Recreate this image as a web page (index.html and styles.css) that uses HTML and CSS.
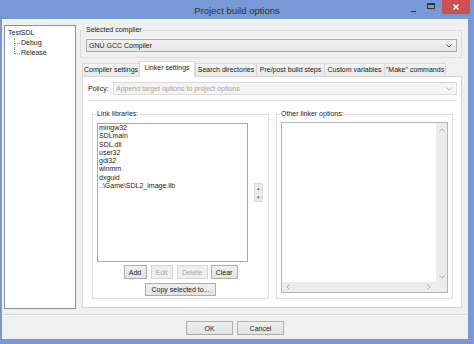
FILE: index.html
```html
<!DOCTYPE html>
<html lang="en">
<head>
  <meta charset="UTF-8" />
  <title>Project build options</title>
  <link rel="stylesheet" href="styles.css">
</head>
<body>

<div class="window">
  <div class="titlebar">
    <div></div>
    <div class="title">Project build options</div>
    <div class="caption">
      <span class="cap cap-min"><i class="min-glyph"></i></span>
      <span class="cap cap-max"><i class="max-glyph"></i></span>
      <span class="cap cap-close">
        <svg width="6" height="6" viewBox="0 0 6 6"><path d="M0.5 0.5 L5.5 5.5 M5.5 0.5 L0.5 5.5" stroke="#fff" stroke-width="1.4"/></svg>
      </span>
    </div>
  </div>

  <div class="client">
    <div class="main">
      <div class="tree">
        <div class="tree-root">TestSDL</div>
        <div class="tree-children">
          <div class="tree-child">Debug</div>
          <div class="tree-child">Release</div>
        </div>
      </div>

      <div class="right">
        <fieldset class="group compiler-group">
          <legend>Selected compiler</legend>
          <div class="combo">
            <span>GNU GCC Compiler</span>
            <svg width="6" height="4" viewBox="0 0 6 4"><path d="M0.5 0.5 L3 3 L5.5 0.5" fill="none" stroke="#555" stroke-width="1"/></svg>
          </div>
        </fieldset>

        <div class="tabs">
          <div class="tab tab-compiler">Compiler settings</div>
          <div class="tab tab-linker active">Linker settings</div>
          <div class="tab tab-search">Search directories</div>
          <div class="tab tab-steps">Pre/post build steps</div>
          <div class="tab tab-vars">Custom variables</div>
          <div class="tab tab-make">"Make" commands</div>
        </div>

        <div class="tab-panel">
          <div class="policy-row">
            <span class="policy-label">Policy:</span>
            <div class="combo disabled">
              <span>Append target options to project options</span>
              <svg width="6" height="4" viewBox="0 0 6 4"><path d="M0.5 0.5 L3 3 L5.5 0.5" fill="none" stroke="#bbb" stroke-width="1"/></svg>
            </div>
          </div>
          <div class="separator"></div>

          <div class="columns">
            <fieldset class="group libs">
              <legend>Link libraries:</legend>
              <div class="list-row">
                <div class="listbox">
                  <div>mingw32</div>
                  <div>SDLmain</div>
                  <div>SDL.dll</div>
                  <div>user32</div>
                  <div>gdi32</div>
                  <div>winmm</div>
                  <div>dxguid</div>
                  <div>..\Game\SDL2_image.lib</div>
                </div>
                <div class="updown">
                  <span>&#9652;</span>
                  <span>&#9662;</span>
                </div>
              </div>
              <div class="btn-row">
                <button class="btn btn-add">Add</button>
                <button class="btn btn-edit" disabled>Edit</button>
                <button class="btn btn-delete" disabled>Delete</button>
                <button class="btn btn-clear">Clear</button>
              </div>
              <div class="btn-row copy-row">
                <button class="btn btn-copy">Copy selected to...</button>
              </div>
            </fieldset>

            <fieldset class="group other">
              <legend>Other linker options:</legend>
              <div class="textbox">
                <div class="text-area">
                  <div class="text-content"></div>
                  <div class="vscroll">
                    <svg width="6" height="4" viewBox="0 0 6 4"><path d="M0.5 3.5 L3 1 L5.5 3.5" fill="none" stroke="#aaa" stroke-width="1"/></svg>
                    <svg width="6" height="4" viewBox="0 0 6 4"><path d="M0.5 0.5 L3 3 L5.5 0.5" fill="none" stroke="#aaa" stroke-width="1"/></svg>
                  </div>
                </div>
                <div class="hscroll-row">
                  <div class="hscroll">
                    <svg width="4" height="6" viewBox="0 0 4 6"><path d="M3.5 0.5 L1 3 L3.5 5.5" fill="none" stroke="#aaa" stroke-width="1"/></svg>
                    <svg width="4" height="6" viewBox="0 0 4 6"><path d="M0.5 0.5 L3 3 L0.5 5.5" fill="none" stroke="#aaa" stroke-width="1"/></svg>
                  </div>
                  <div class="corner"></div>
                </div>
              </div>
            </fieldset>
          </div>
        </div>
      </div>
    </div>

    <div class="footer">
      <div class="separator wide"></div>
      <div class="btn-row dialog-buttons">
        <button class="btn btn-ok">OK</button>
        <button class="btn btn-cancel">Cancel</button>
      </div>
    </div>
  </div>
</div>

</body>
</html>
```

FILE: styles.css
```css
* {
  box-sizing: border-box;
}
html, body {
  margin: 0;
  padding: 0;
}
body {
  width: 474px;
  height: 344px;
  overflow: hidden;
  font-family: "Liberation Sans", Arial, sans-serif;
  font-size: 7px;
  color: #222;
  background: #7898d6;
}
.window {
  display: flex;
  flex-direction: column;
  width: 474px;
  height: 344px;
  background: #7898d6;
}

/* title bar */
.titlebar {
  height: 19px;
  flex: none;
  display: grid;
  grid-template-columns: 70px 1fr 70px;
}
.title {
  text-align: center;
  font-size: 9.5px;
  line-height: 21px;
  color: #333;
}
.caption {
  display: flex;
  padding-right: 4px;
}
.cap {
  height: 14px;
  display: flex;
  align-items: center;
  justify-content: center;
}
.cap-min, .cap-max {
  width: 18px;
}
.min-glyph {
  display: block;
  width: 5px;
  height: 1px;
  margin-top: 8px;
  background: #333;
}
.max-glyph {
  display: block;
  width: 8px;
  height: 6px;
  margin-top: -2px;
  border: 1px solid #333;
  border-top-width: 2px;
}
.cap-close {
  width: 28px;
  margin-left: 2px;
  background: #c9524d;
}

/* client area */
.client {
  flex: 1;
  margin: 0 6px 5px 2px;
  background: #f0f0f0;
  display: flex;
  flex-direction: column;
}
.main {
  display: flex;
  gap: 4px;
  height: 290px;
  padding: 6px 2px 0 2px;
}
.tree {
  width: 72px;
  flex: none;
  background: #fff;
  border: 1px solid #8e8f94;
  padding: 2px 0 0 3px;
  line-height: 10px;
}
.tree-children {
  margin-left: 6px;
}
.tree-child {
  position: relative;
  padding-left: 7px;
}
.tree-child::before {
  content: '';
  position: absolute;
  left: 0;
  top: 0;
  width: 5px;
  height: 5px;
  border-left: 1px dotted #9a9a9a;
  border-bottom: 1px dotted #9a9a9a;
}
.tree-child:not(:last-child)::after {
  content: '';
  position: absolute;
  left: 0;
  top: 5px;
  bottom: 0;
  border-left: 1px dotted #9a9a9a;
}
.right {
  flex: 1;
  display: flex;
  flex-direction: column;
  padding-right: 4px;
}

/* group boxes */
.group {
  margin: 0;
  padding: 0;
  border: 1px solid #dcdcdc;
  min-width: 0;
}
.group legend {
  padding: 0 1px;
  margin-left: -1px;
  line-height: 8px;
}
.compiler-group {
  margin-top: 1px;
  padding: 5px 4px 5px 5px;
}

/* combos */
.combo {
  height: 13px;
  display: flex;
  align-items: center;
  justify-content: space-between;
  padding: 0 4px 0 2px;
  border: 1px solid #acacac;
  background: linear-gradient(#f2f2f2, #e5e5e5);
}
.combo.disabled {
  flex: 1;
  border-color: #dadada;
  background: #f4f4f4;
  color: #a3a3a3;
}

/* tabs */
.tabs {
  display: flex;
  align-items: flex-end;
  height: 14px;
  margin-top: 4px;
  padding-left: 2px;
  position: relative;
  z-index: 1;
}
.tab {
  height: 13px;
  line-height: 12px;
  padding: 0;
  text-align: center;
  border: 1px solid #d9d9d9;
  border-bottom: none;
  background: linear-gradient(#f3f3f3, #e9e9e9);
  margin-right: -1px;
  white-space: nowrap;
}
.tab.active {
  height: 16px;
  line-height: 12px;
  margin: 0 0 -1px 0;
  background: #fff;
}
.tab-compiler { width: 58px; }
.tab-linker { width: 56px; }
.tab-search { width: 62px; }
.tab-steps { width: 69px; }
.tab-vars { width: 61px; }
.tab-make { width: 62px; }
.tab-panel {
  height: 232px;
  flex: none;
  margin-left: 2px;
  border: 1px solid #d9d9d9;
  background: #fff;
  padding: 5px 4px 8px 5px;
  display: flex;
  flex-direction: column;
}
.policy-row {
  display: flex;
  align-items: center;
  height: 13px;
}
.policy-label {
  width: 25px;
  flex: none;
}
.separator {
  height: 1px;
  margin-top: 5px;
  background: #dadada;
  flex: none;
}
.columns {
  flex: 1;
  display: flex;
  gap: 7px;
  margin: 9px 4px 0 4px;
}
.columns .group {
  flex: 1;
  display: flex;
  flex-direction: column;
}

/* link libraries */
.libs {
  padding: 5px 4px 2px 4px;
}
.list-row {
  display: flex;
  align-items: center;
  gap: 6px;
  height: 139px;
  flex: none;
}
.listbox {
  width: 151px;
  height: 139px;
  border: 1px solid #a9a9a9;
  background: #fff;
  padding: 0 1px;
  line-height: 8.3px;
}
.updown {
  width: 9px;
  height: 19px;
  display: flex;
  flex-direction: column;
  border: 1px solid #dcdcdc;
  background: #e8e8e8;
  font-size: 5px;
  color: #666;
}
.updown span {
  flex: 1;
  display: flex;
  align-items: center;
  justify-content: center;
}
.btn-row {
  display: flex;
  justify-content: center;
  gap: 4px;
  margin-top: 3px;
}
.copy-row {
  margin-top: 4px;
}
.btn {
  height: 14px;
  padding: 0;
  font-family: inherit;
  font-size: 7px;
  color: #222;
  border: 1px solid #adadad;
  background: linear-gradient(#f0f0f0, #e3e3e3);
}
.btn:disabled {
  color: #a8a8a8;
  border-color: #d6d6d6;
  background: #efefef;
}
.btn-add { width: 23px; }
.btn-edit { width: 22px; }
.btn-delete { width: 31px; }
.btn-clear { width: 27px; margin-left: -1px; }
.btn-copy { width: 71px; height: 13px; }

/* other linker options */
.other {
  padding: 4px 4px 5px 4px;
}
.textbox {
  flex: 1;
  display: flex;
  flex-direction: column;
  border: 1px solid #b4b4b4;
  background: #fff;
}
.text-area {
  flex: 1;
  display: flex;
}
.text-content {
  flex: 1;
}
.vscroll {
  width: 11px;
  background: #ececec;
  display: flex;
  flex-direction: column;
  justify-content: space-between;
  align-items: center;
  padding: 5px 0 3px;
}
.hscroll-row {
  height: 10px;
  display: flex;
}
.hscroll {
  flex: 1;
  background: #ececec;
  display: flex;
  justify-content: space-between;
  align-items: center;
  padding: 0 5px 0 4px;
}
.corner {
  width: 11px;
  background: #ececec;
}

/* dialog buttons */
.footer {
  flex: 1;
}
.separator.wide {
  margin: 5px 2px 0 2px;
  background: #d5d5d5;
  border-bottom: 1px solid #fff;
  height: 2px;
}
.dialog-buttons {
  margin-top: 5px;
}
.btn-ok, .btn-cancel {
  width: 47px;
}
```
